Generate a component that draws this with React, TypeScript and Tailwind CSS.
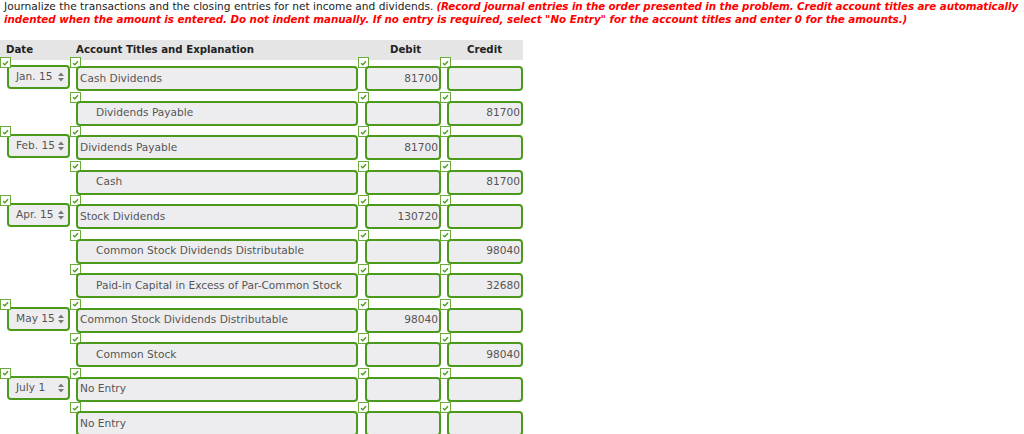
import React from 'react';

type Entry = {
  date?: string;
  account: string;
  indent?: boolean;
  debit?: string;
  credit?: string;
};

const entries: Entry[] = [
  { date: 'Jan. 15', account: 'Cash Dividends', debit: '81700' },
  { account: 'Dividends Payable', indent: true, credit: '81700' },
  { date: 'Feb. 15', account: 'Dividends Payable', debit: '81700' },
  { account: 'Cash', indent: true, credit: '81700' },
  { date: 'Apr. 15', account: 'Stock Dividends', debit: '130720' },
  { account: 'Common Stock Dividends Distributable', indent: true, credit: '98040' },
  { account: 'Paid-in Capital in Excess of Par-Common Stock', indent: true, credit: '32680' },
  { date: 'May 15', account: 'Common Stock Dividends Distributable', debit: '98040' },
  { account: 'Common Stock', indent: true, credit: '98040' },
  { date: 'July 1', account: 'No Entry' },
  { account: 'No Entry' },
];

function Check({ className }: { className: string }) {
  return (
    <span
      className={`absolute w-[11px] h-[11px] bg-white border border-[#6aab3c] flex items-center justify-center ${className}`}
    >
      <svg width="7" height="6" viewBox="0 0 7 6">
        <path d="M1 3.2 L2.8 4.8 L6 1.2" stroke="#4f9a22" strokeWidth="1.3" fill="none" />
      </svg>
    </span>
  );
}

function Field({ children, className }: { children?: React.ReactNode; className: string }) {
  return (
    <div
      className={`relative h-[25px] bg-[#ededf0] border-2 border-[#4c9a1c] rounded-[4px] flex items-center text-[#555] ${className}`}
    >
      {children}
    </div>
  );
}

function Row({ e }: { e: Entry }) {
  return (
    <div className="h-[34.5px] flex items-start pt-[6px] text-[10.6px]">
      <div className="relative w-[63px] ml-[7px] -mt-[1px]">
        {e.date && (
          <>
            <Check className="-left-[7px] -top-[8px]" />
            <div className="h-[24px] bg-[#ededf0] border-2 border-[#4c9a1c] rounded-[4px] flex items-center pl-[7px] pr-[4px] text-[#555]">
              <span className="flex-1">{e.date}</span>
              <svg width="6" height="10" viewBox="0 0 6 10">
                <path d="M0 4 L3 0.5 L6 4 Z M0 6 L3 9.5 L6 6 Z" fill="#777" />
              </svg>
            </div>
          </>
        )}
      </div>
      <div className="relative ml-[6px]">
        <Check className="-left-[6px] -top-[9px]" />
        <Field className={`w-[282px] ${e.indent ? 'pl-[18px]' : 'pl-[2px]'}`}>{e.account}</Field>
      </div>
      <div className="relative ml-[7px]">
        <Check className="-left-[7px] -top-[9px]" />
        <Field className="w-[76px] justify-end pr-[1px]">{e.debit}</Field>
      </div>
      <div className="relative ml-[6px]">
        <Check className="-left-[7px] -top-[9px]" />
        <Field className="w-[76px] justify-end pr-[1px]">{e.credit}</Field>
      </div>
    </div>
  );
}

export default function App() {
  return (
    <div className="w-[1024px] h-[434px] overflow-hidden bg-white font-['DejaVu_Sans',Verdana,sans-serif] text-[10.2px]">
      <div className="px-[4px] leading-[13px] text-[#222] whitespace-nowrap">
        <div className="flex">
          <span className="text-[10.6px] tracking-[0.02px]">
            Journalize the transactions and the closing entries for net income and dividends.
          </span>
          <span className="ml-[3px] text-[10.35px] text-[#ff0000] font-bold italic tracking-[-0.1px]">
            (Record journal entries in the order presented in the problem. Credit account titles are automatically
          </span>
        </div>
        <div className="text-[10.35px] text-[#ff0000] font-bold italic tracking-[-0.05px]">
          indented when the amount is entered. Do not indent manually. If no entry is required, select "No Entry" for
          the account titles and enter 0 for the amounts.)
        </div>
      </div>
      <div className="mt-[14px] w-[523px]">
        <div className="h-[20px] bg-[#e5e5e5] flex items-center font-bold text-[#222]">
          <span className="w-[76px] pl-[6px]">Date</span>
          <span className="w-[289px]">Account Titles and Explanation</span>
          <span className="w-[81px] text-center">Debit</span>
          <span className="w-[77px] text-center">Credit</span>
        </div>
        {entries.map((e, i) => (
          <Row key={i} e={e} />
        ))}
      </div>
    </div>
  );
}
